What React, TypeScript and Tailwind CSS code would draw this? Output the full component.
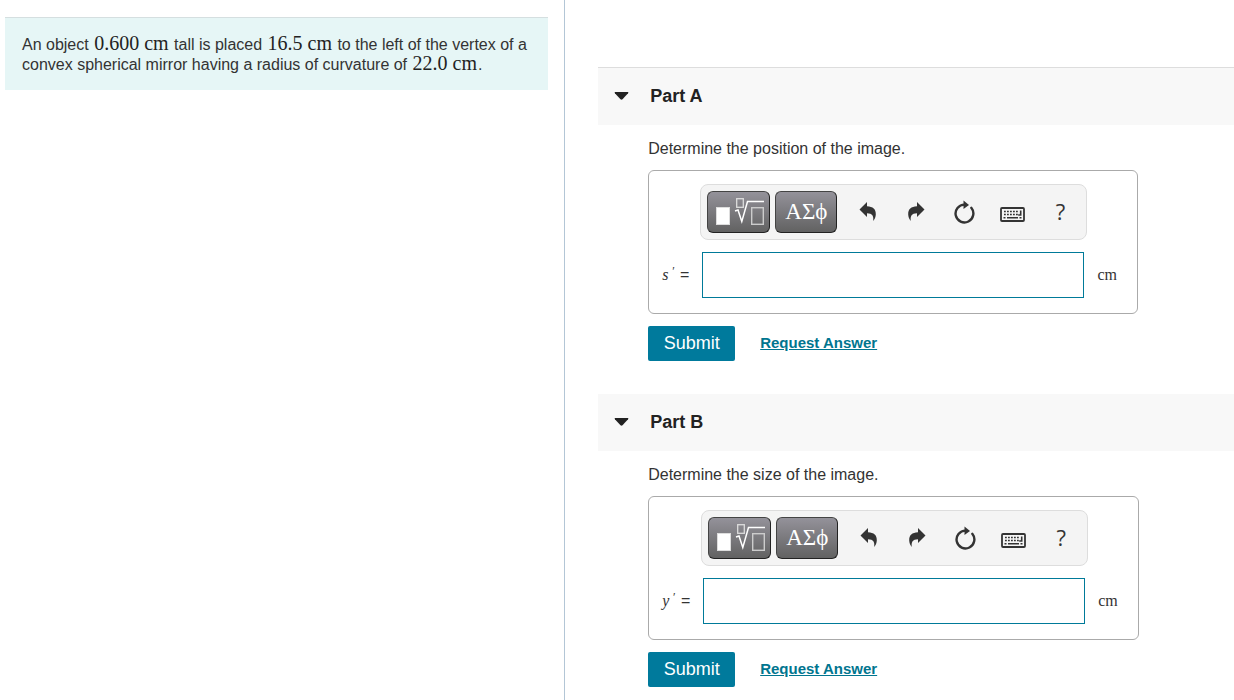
import { useId, useState } from "react";

const sans = "font-['Liberation_Sans',Arial,sans-serif]";
const serif = "font-['Liberation_Serif','Times_New_Roman',serif]";

function Quantity({ children }: { children: string }) {
  return <span className={`${serif} px-px text-xl leading-4 whitespace-nowrap text-[#222]`}>{children}</span>;
}

function TemplatesIcon() {
  return (
    <svg width="51" height="30" viewBox="0 0 51 30" fill="none" aria-hidden="true">
      <rect x="3.500" y="10.500" width="13" height="17" fill="#fff" stroke="#ddd" />
      <rect x="23.700" y="1.700" width="6.600" height="8.600" stroke="#ddd" strokeWidth="1.300" />
      <path d="M22 14l3-1 3.800 11.500L34.500 4.500H51" stroke="#fff" strokeWidth="1.500" />
      <rect x="38.700" y="10.700" width="11.600" height="16.600" stroke="#ccc" strokeWidth="1.400" />
    </svg>
  );
}

function UndoIcon() {
  return (
    <svg width="18" height="20" viewBox="0 0 18 20" fill="#333" aria-hidden="true">
      <path d="M0.500 7.500 8 0v4.300c6 .2 9 3 8.800 8.200-.1 2.600-1 4.500-2.600 6.500.6-5-.7-7.700-6.200-7.800V15Z" />
    </svg>
  );
}

function RedoIcon() {
  return (
    <svg width="18" height="20" viewBox="0 0 18 20" fill="#333" aria-hidden="true">
      <path d="M17.500 7.500 10 0v4.300c-6 .2-9 3-8.800 8.200.1 2.600 1 4.500 2.600 6.500-.6-5 .7-7.700 6.200-7.800V15Z" />
    </svg>
  );
}

function ResetIcon() {
  return (
    <svg width="22" height="24" viewBox="0 0 22 24" fill="none" aria-hidden="true">
      <path d="M11.500 4.600a8.900 8.900 0 1 0 6.800 3.200" stroke="#333" strokeWidth="2.400" strokeLinecap="round" />
      <path d="M10.500 0.500 16 5l-5.500 4Z" fill="#333" />
    </svg>
  );
}

function KeyboardIcon() {
  return (
    <svg width="25" height="15" viewBox="0 0 25 15" fill="none" aria-hidden="true">
      <rect x="1" y="1" width="23" height="13" rx="1" stroke="#333" strokeWidth="1.800" />
      <path d="M4 4.500h14M4 7.500h14" stroke="#333" strokeWidth="1.700" strokeDasharray="1.800 1.200" />
      <path d="M20.700 3.500v4.500h-2.500M3.500 10.700h2M7 10.700h11M19.500 10.700h2" stroke="#333" strokeWidth="1.600" />
    </svg>
  );
}

const darkKey =
  "flex h-[42px] items-center justify-center rounded-md border border-[#444] border-r-[#222] border-b-[#222] bg-linear-to-b from-[#94929a] to-[#626262] text-white";
const plainKey = "flex h-[42px] w-12 items-center justify-center";

function Toolbar() {
  return (
    <div className="flex h-14 items-center rounded-lg border border-[#ddd] bg-[#f4f4f4] pr-0.5 pl-1.5">
      <button type="button" aria-label="Templates" className={`${darkKey} w-[63px]`}>
        <TemplatesIcon />
      </button>
      <button type="button" aria-label="Symbols" className={`${darkKey} ${serif} mr-[7px] ml-[5px] w-[62px] text-[23px]`}>
        ΑΣϕ
      </button>
      <button type="button" aria-label="Undo" className={plainKey}>
        <UndoIcon />
      </button>
      <button type="button" aria-label="Redo" className={plainKey}>
        <RedoIcon />
      </button>
      <button type="button" aria-label="Reset" className={plainKey}>
        <ResetIcon />
      </button>
      <button type="button" aria-label="Keyboard shortcuts" className={`${plainKey} pt-1`}>
        <KeyboardIcon />
      </button>
      <button type="button" aria-label="Help" className={`${plainKey} pb-0.5 font-['Open_Sans',sans-serif] text-[22px] text-[#333]`}>
        ?
      </button>
    </div>
  );
}

interface PartProps {
  title: string;
  prompt: string;
  symbol: string;
  first?: boolean;
}

function Part({ title, prompt, symbol, first = false }: PartProps) {
  const [open, setOpen] = useState(true);
  const id = useId();
  return (
    <section>
      <h2 className={first ? "border-t border-[#ddd] bg-[#f8f8f8]" : "bg-[#f8f8f8]"}>
        <button
          type="button"
          aria-expanded={open}
          onClick={() => setOpen(!open)}
          className="flex h-[57px] w-full items-center gap-[21px] pb-0.5 pl-4 text-lg font-bold text-[#222]"
        >
          <svg width="15" height="8" viewBox="0 0 15 8" fill="#222" aria-hidden="true">
            <path d="M1.200 0h12.600q1 .4.300 1.200L8.500 7.200q-1 .9-2 0L.9 1.200Q.2.400 1.200 0Z" />
          </svg>
          {title}
        </button>
      </h2>
      {open && (
        <div className="pl-[50px]">
          <p className="pt-3.5 pb-[11px] leading-5">{prompt}</p>
          <form onSubmit={(e) => e.preventDefault()}>
            <div className="w-fit rounded-md border border-[#aaa] pt-[13px] pr-5 pb-[15px] pl-[13px]">
              <div className="grid grid-cols-[auto_auto_auto] items-center gap-y-3">
                <div className="col-start-2">
                  <Toolbar />
                </div>
                <label htmlFor={id} className="col-start-1 flex items-center pr-[11px] whitespace-nowrap">
                  <i className={`${serif} text-base`}>{symbol}</i>
                  <span className={`${serif} pb-2 pl-[3px] text-xs italic`}>′</span>
                  <span className="pl-1.5 text-base">=</span>
                </label>
                <div className="pr-[3px] pl-0.5">
                  <input
                    id={id}
                    type="text"
                    className="block h-[46px] w-full border border-[#007a99] bg-white px-2 outline-none"
                  />
                </div>
                <span className={`${serif} pl-2.5 text-base`}>cm</span>
              </div>
            </div>
            <div className="flex items-center gap-[25px] pt-3">
              <button type="submit" className="h-[35px] w-[87px] rounded-xs bg-[#007a9c] pb-0.5 text-lg text-white">
                Submit
              </button>
              <a href="#request-answer" className="text-[15px] font-bold text-[#00758f] underline">
                Request Answer
              </a>
            </div>
          </form>
        </div>
      )}
    </section>
  );
}

export default function App() {
  return (
    <main className={`${sans} flex min-h-screen bg-white text-base text-[#333]`}>
      <div className="w-[45.8%] shrink-0 border-r border-[#b3c6d6] pt-[17px] pr-4 pl-[5px]">
        <p className="border-t border-[#d5dfe0] bg-[#e6f6f6] pt-[17px] pr-3 pb-[15px] pl-[17px] leading-5">
          An object <Quantity>0.600 cm</Quantity> tall is placed <Quantity>16.5 cm</Quantity> to the left of the vertex
          of a convex spherical mirror having a radius of curvature of <Quantity>22.0 cm</Quantity>.
        </p>
      </div>
      <div className="flex min-w-0 flex-1 flex-col gap-[33px] pt-[67px] pl-[33px]">
        <Part title="Part A" prompt="Determine the position of the image." symbol="s" first />
        <Part title="Part B" prompt="Determine the size of the image." symbol="y" />
      </div>
    </main>
  );
}
